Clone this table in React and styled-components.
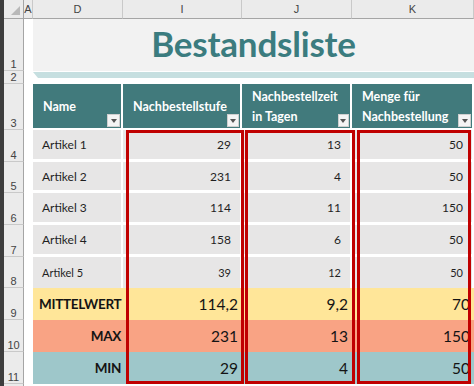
import React from 'react';
import styled, { createGlobalStyle, css } from 'styled-components';

const GlobalStyle = createGlobalStyle`
  html, body {
    margin: 0;
    padding: 0;
    background: #ffffff;
  }
  body {
    font-family: 'Lato', 'Liberation Sans', sans-serif;
    color: #1c1c1c;
    overflow: hidden;
  }
`;

const Page = styled.div`
  display: flex;
  width: 474px;
  height: 386px;
  overflow: hidden;
`;

const Strip = styled.div`
  width: 4px;
  flex: none;
  background: #3d3d3d;
`;

const Sheet = styled.div`
  display: grid;
  grid-template-columns: 20px 9px 90px 119px 110px 122px;
  grid-template-rows: 19px 52px 13px 46px 32px 31px 32px 32px 31px 32px 32px 32px 20px;
  flex: 1;
`;

const HeadBase = css`
  background: #ebebeb;
  font-family: 'Liberation Sans', sans-serif;
  font-size: 11px;
  line-height: 10px;
  color: #444;
  box-sizing: border-box;
  overflow: hidden;
`;

const ColHead = styled.div`
  ${HeadBase};
  display: flex;
  align-items: center;
  justify-content: center;
  border-right: 1px solid #c9c9c9;
  border-bottom: 1px solid #a5a5a5;
`;

const Corner = styled.div`
  ${HeadBase};
  display: flex;
  align-items: flex-end;
  justify-content: flex-end;
  padding: 0 3px 3px 0;
  border-right: 1px solid #a5a5a5;
  border-bottom: 1px solid #a5a5a5;
`;

const CornerMark = styled.div`
  width: 9px;
  height: 9px;
  background: #b9b9b9;
  clip-path: polygon(100% 0, 100% 100%, 0 100%);
`;

const RowHead = styled.div`
  ${HeadBase};
  grid-column: 1;
  display: flex;
  align-items: flex-end;
  justify-content: center;
  padding-bottom: 1px;
  border-right: 1px solid #a5a5a5;
  border-bottom: 1px solid #c9c9c9;
`;

const TitleBand = styled.div`
  grid-column: 3 / -1;
  grid-row: 2;
  background: #f2f2f2;
  display: flex;
  align-items: center;
  justify-content: center;
  padding-bottom: 4px;
`;

const Title = styled.h1`
  margin: 0;
  font-family: 'Lato', sans-serif;
  font-weight: 700;
  font-size: 35px;
  letter-spacing: -0.2px;
  color: #3b7c7f;
`;

const StripeRow = styled.div`
  grid-column: 3 / -1;
  grid-row: 3;
`;

const Stripe = styled.div`
  height: 6px;
  margin-top: 1px;
  background: #c6dfe0;
  clip-path: polygon(0 0, 100% 0, 100% 100%, 5px 100%);
`;

const HeaderCell = styled.div`
  display: flex;
  margin: 0 2px 2px 0;
  background: #417a7c;
  color: #ffffff;
  font-weight: 700;
  font-size: 12.5px;
  line-height: 20px;
  padding-left: 10px;
`;

const HeaderText = styled.span`
  flex: 1;
  align-self: center;
  padding-top: 2px;
`;

const FilterButton = styled.span`
  align-self: flex-end;
  width: 11px;
  height: 11px;
  margin: 0 1px 1px 0;
  background: #f4f4f4;
  border: 1px solid #cfcfcf;
  display: flex;
  align-items: center;
  justify-content: center;
  &::after {
    content: '';
    border-left: 3px solid transparent;
    border-right: 3px solid transparent;
    border-top: 4px solid #555;
  }
`;

const rowTone = {
  item: '#e7e6e6',
  avg: '#ffe699',
  max: '#f9a384',
  min: '#9ec7ca',
};

const Cell = styled.div`
  display: flex;
  align-items: center;
  justify-content: ${(p) => (p.$right ? 'flex-end' : 'flex-start')};
  background: ${(p) => rowTone[p.$tone]};
  box-sizing: border-box;
  white-space: nowrap;
  ${(p) =>
    p.$tone === 'item'
      ? css`
          margin: 0 2px ${p.$last ? '0' : '3px'} 0;
          padding: ${p.$right ? '0 9px 0 0' : '0 0 0 9px'};
          font-size: ${p.$last ? '11px' : '12px'};
          color: #1f1f1f;
        `
      : css`
          padding: ${p.$right ? '0 4px 0 0' : '0 0 0 6px'};
          font-size: 15.5px;
          color: #141414;
        `}
  ${(p) =>
    p.$label &&
    css`
      font-weight: 700;
      font-size: 13.5px;
      letter-spacing: -0.3px;
      padding-right: 2px;
    `}
`;

const Highlight = styled.div`
  grid-row: 5 / 13;
  grid-column: ${(p) => p.$col};
  margin: 0 ${(p) => p.$right}px 0 ${(p) => p.$left}px;
  border: 3px solid #c00000;
  pointer-events: none;
  z-index: 1;
`;

const columns = ['A', 'D', 'I', 'J', 'K'];

const headers = [
  'Name',
  'Nachbestellstufe',
  ['Nachbestellzeit', 'in Tagen'],
  ['Menge für', 'Nachbestellung'],
];

const items = [
  ['Artikel 1', 29, 13, 50],
  ['Artikel 2', 231, 4, 50],
  ['Artikel 3', 114, 11, 150],
  ['Artikel 4', 158, 6, 50],
  ['Artikel 5', 39, 12, 50],
];

const summary = [
  { tone: 'avg', label: 'MITTELWERT', values: ['114,2', '9,2', '70'], left: true },
  { tone: 'max', label: 'MAX', values: ['231', '13', '150'] },
  { tone: 'min', label: 'MIN', values: ['29', '4', '50'] },
];

export default function App() {
  return (
    <>
      <GlobalStyle />
      <Page>
        <Strip />
        <Sheet>
          <Corner>
            <CornerMark />
          </Corner>
          {columns.map((c) => (
            <ColHead key={c}>{c}</ColHead>
          ))}

          {Array.from({ length: 11 }, (_, i) => (
            <RowHead key={i} style={{ gridRow: i + 2 }}>
              {i + 1}
            </RowHead>
          ))}
          <RowHead style={{ gridRow: 13 }} />

          <TitleBand>
            <Title>Bestandsliste</Title>
          </TitleBand>
          <StripeRow>
            <Stripe />
          </StripeRow>

          {headers.map((h, i) => (
            <HeaderCell key={i} style={{ gridRow: 4, gridColumn: i + 3 }}>
              <HeaderText>
                {Array.isArray(h) ? (
                  <>
                    {h[0]}
                    <br />
                    {h[1]}
                  </>
                ) : (
                  h
                )}
              </HeaderText>
              <FilterButton />
            </HeaderCell>
          ))}

          {items.map((row, r) =>
            row.map((v, c) => (
              <Cell
                key={`${r}-${c}`}
                $tone="item"
                $right={c > 0}
                $last={r === items.length - 1}
                style={{ gridRow: r + 5, gridColumn: c + 3 }}
              >
                {v}
              </Cell>
            ))
          )}

          {summary.map((s, r) => (
            <React.Fragment key={s.label}>
              <Cell
                $tone={s.tone}
                $label
                $right={!s.left}
                style={{ gridRow: r + 10, gridColumn: 3 }}
              >
                {s.label}
              </Cell>
              {s.values.map((v, c) => (
                <Cell
                  key={c}
                  $tone={s.tone}
                  $right
                  style={{ gridRow: r + 10, gridColumn: c + 4 }}
                >
                  {v}
                </Cell>
              ))}
            </React.Fragment>
          ))}

          <Highlight $col={4} $left={3} $right={-2} />
          <Highlight $col={5} $left={3} $right={-3} />
          <Highlight $col={6} $left={5} $right={3} />
        </Sheet>
      </Page>
    </>
  );
}
